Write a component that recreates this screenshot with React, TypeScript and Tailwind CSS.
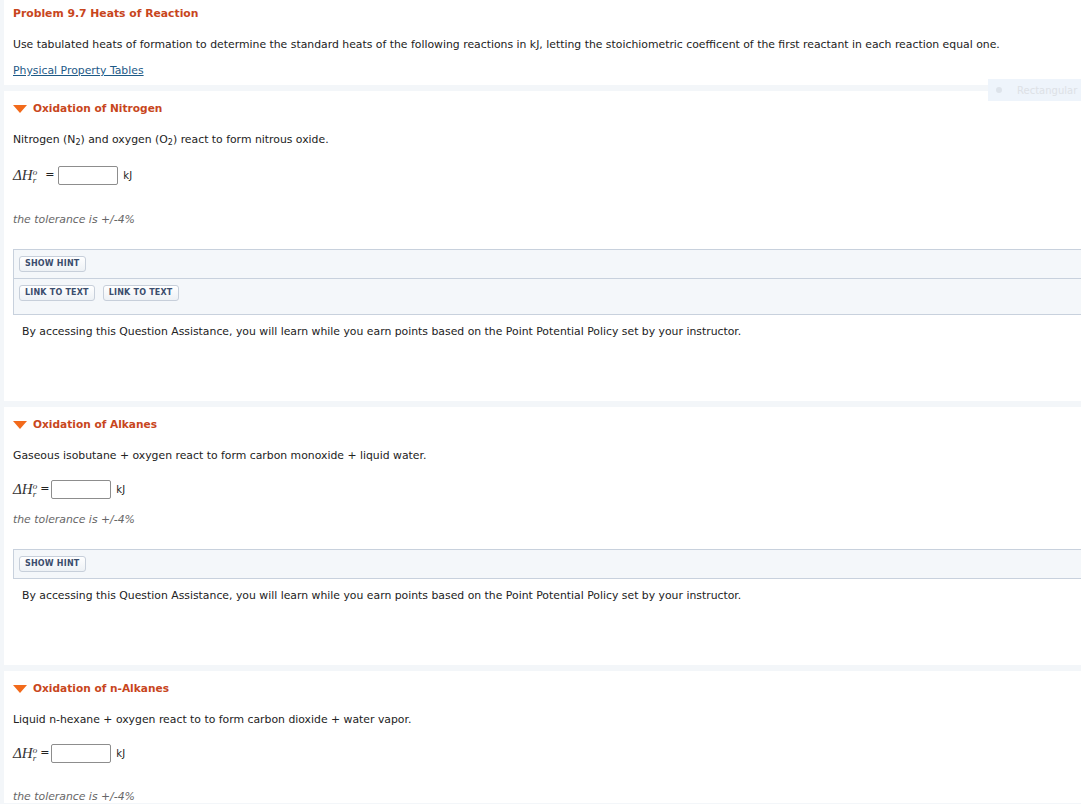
import React from 'react';

const font = "font-['Verdana','DejaVu_Sans',sans-serif]";

const Caret = () => (
    <svg width="14" height="9" viewBox="0 0 14 9" className="mr-[6px]">
        <polygon points="0,0 14,0 7,8" fill="#f26a1b" />
    </svg>
);

const HintButton = ({ label }: { label: string }) => (
    <button className="h-[16px] px-[5px] rounded-[3px] border border-[#c7cfda] bg-gradient-to-b from-white to-[#edf1f5] text-[8px] font-bold text-[#3b4d6d] leading-none tracking-[0.2px]">
        {label}
    </button>
);

// ΔH with stacked "o" / "r" marks
const DeltaH = () => (
    <span className="inline-flex items-center font-['Liberation_Serif',serif] italic text-[#333]">
        <span className="text-[15px] leading-none">ΔH</span>
        <span className="flex flex-col text-[9px] leading-[8px] mt-[1px]">
            <span>o</span>
            <span>r</span>
        </span>
    </span>
);

const Answer = ({ spaced, inputWidth }: { spaced?: boolean; inputWidth: number }) => (
    <div className="flex items-center text-[11px] text-[#222]">
        <DeltaH />
        <span className={spaced ? 'ml-[8px] mr-[4px]' : 'ml-[3px] mr-[2px]'}>=</span>
        <input
            className="h-[19px] border border-[#8d8d8d] rounded-[2px] bg-white"
            style={{ width: inputWidth }}
        />
        <span className="ml-[5px] text-[10px]">kJ</span>
    </div>
);

const Section = ({
    title,
    text,
    spaced,
    inputWidth,
    links,
    ansGap,
    tolGap,
    after,
}: {
    title: string;
    text: React.ReactNode;
    spaced?: boolean;
    inputWidth: number;
    links?: boolean;
    ansGap: string;
    tolGap: string;
    after?: boolean;
}) => (
    <div className="bg-white ml-[4px] pl-[9px] pt-[11px]">
        <div className="flex items-center h-[14px] text-[10.6px] font-bold text-[#c8461d]">
            <Caret />
            {title}
        </div>
        <div className="mt-[16px] text-[10.85px] text-[#222] h-[14px]">{text}</div>
        <div className={ansGap}>
            <Answer spaced={spaced} inputWidth={inputWidth} />
        </div>
        <div className={`${tolGap} text-[10.85px] italic text-[#666] h-[14px]`}>the tolerance is +/-4%</div>
        {after && (
            <>
                <div className="mt-[23px] border border-r-0 border-[#c8d1dd] bg-[#f4f7fa]">
                    <div className="h-[28px] flex items-center pl-[5px]">
                        <HintButton label="SHOW HINT" />
                    </div>
                    {links && (
                        <div className="h-[36px] border-t border-[#c8d1dd] flex items-start pt-[6px] pl-[5px] gap-[8px]">
                            <HintButton label="LINK TO TEXT" />
                            <HintButton label="LINK TO TEXT" />
                        </div>
                    )}
                </div>
                <div className="pl-[9px] pt-[9px] text-[10.85px] text-[#222] h-[86px]">
                    By accessing this Question Assistance, you will learn while you earn points based on the Point
                    Potential Policy set by your instructor.
                </div>
            </>
        )}
    </div>
);

export default function App() {
    return (
        <div className={`${font} relative w-[1081px] h-[804px] overflow-hidden bg-[#f3f6f9]`}>
            <div className="bg-white ml-[4px] h-[85px] pl-[9px] pt-[6px]">
                <div className="text-[10.8px] font-bold text-[#c8461d] h-[14px]">Problem 9.7 Heats of Reaction</div>
                <div className="mt-[17px] text-[10.85px] text-[#222] h-[14px]">
                    Use tabulated heats of formation to determine the standard heats of the following reactions in kJ,
                    letting the stoichiometric coefficent of the first reactant in each reaction equal one.
                </div>
                <a href="#" className="block mt-[12px] text-[10.85px] text-[#1d5a87] underline w-fit">
                    Physical Property Tables
                </a>
            </div>

            <div className="absolute left-[988px] top-[79px] h-[22px] w-[100px] bg-[#eef4fb] flex items-center text-[10px] text-[#dde1e6]">
                <span className="w-[6px] h-[6px] rounded-full bg-[#dde3ea] ml-[8px] mr-[15px]" />
                Rectangular
            </div>

            <div className="h-[6px]" />
            <Section
                title="Oxidation of Nitrogen"
                text={
                    <>
                        Nitrogen (N<sub className="text-[8px]">2</sub>) and oxygen (O<sub className="text-[8px]">2</sub>)
                        react to form nitrous oxide.
                    </>
                }
                spaced
                inputWidth={60}
                links
                ansGap="mt-[20px]"
                tolGap="mt-[27px]"
                after
            />
            <div className="h-[6px]" />
            <Section
                title="Oxidation of Alkanes"
                text="Gaseous isobutane + oxygen react to form carbon monoxide + liquid water."
                inputWidth={60}
                ansGap="mt-[18px]"
                tolGap="mt-[13px]"
                after
            />
            <div className="h-[6px]" />
            <Section
                title="Oxidation of n-Alkanes"
                text="Liquid n-hexane + oxygen react to to form carbon dioxide + water vapor."
                inputWidth={60}
                ansGap="mt-[18px]"
                tolGap="mt-[26px]"
            />
        </div>
    );
}
